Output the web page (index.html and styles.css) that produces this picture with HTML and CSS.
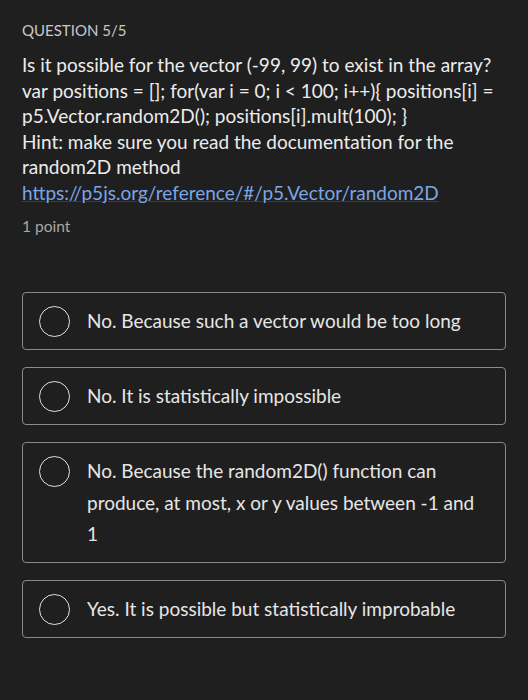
FILE: index.html
```html
<!DOCTYPE html>
<html lang="en">
<head>
  <meta charset="UTF-8">
  <meta name="viewport" content="width=device-width, initial-scale=1">
  <title>Question 5/5</title>
  <link rel="stylesheet" href="styles.css">
</head>
<body>
  <div class="question">
    <div class="q-number">QUESTION 5/5</div>
    <div class="q-text">
      Is it possible for the vector (-99, 99) to exist in the array? var positions = []; for(var i = 0; i &lt; 100; i++){ positions[i] = p5.Vector.random2D(); positions[i].mult(100); }<br>
      Hint: make sure you read the documentation for the random2D method<br>
      <a href="#">https://p5js.org/reference/#/p5.Vector/random2D</a>
    </div>
    <div class="q-points">1 point</div>

    <div class="answers">
      <label class="answer">
        <span class="radio"></span>
        <span class="answer-text">No. Because such a vector would be too long</span>
      </label>
      <label class="answer">
        <span class="radio"></span>
        <span class="answer-text">No. It is statistically impossible</span>
      </label>
      <label class="answer">
        <span class="radio"></span>
        <span class="answer-text">No. Because the random2D() function can produce, at most, x or y values between -1 and 1</span>
      </label>
      <label class="answer">
        <span class="radio"></span>
        <span class="answer-text">Yes. It is possible but statistically improbable</span>
      </label>
    </div>
  </div>
</body>
</html>
```

FILE: styles.css
```css
body {
  margin: 0;
  padding: 0;
  background-color: #1f1f1f;
  color: #e6e6e6;
  font-family: Lato, "Open Sans", sans-serif;
}
.question {
  padding: 20px 22px;
}
.q-number {
  font-size: 15px;
  color: #c8c8c8;
  line-height: 20px;
}
.q-text {
  margin-top: 12px;
  font-size: 19px;
  line-height: 25.5px;
  color: #ececec;
}
.q-text a {
  color: #7aa6e8;
  text-decoration: underline;
  text-decoration-color: #2c3f66;
}
.q-points {
  margin-top: 12px;
  font-size: 15.5px;
  color: #a8a8a8;
}
.answers {
  margin-top: 57px;
  display: flex;
  flex-direction: column;
  gap: 17px;
}
.answer {
  display: flex;
  align-items: flex-start;
  gap: 17px;
  padding: 12px 16px 12px 16px;
  border: 1.5px solid #8a8a8a;
  border-radius: 4px;
  cursor: pointer;
}
.radio {
  flex: none;
  width: 29px;
  height: 29px;
  margin-top: 1px;
  border: 1.5px solid #e0e0e0;
  border-radius: 50%;
}
.answer-text {
  font-size: 19px;
  line-height: 31.5px;
  color: #e6e6e6;
}
```
